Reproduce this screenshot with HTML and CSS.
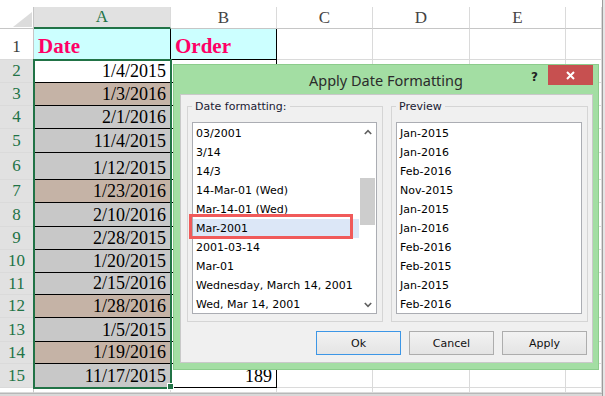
FILE: index.html
```html
<!DOCTYPE html>
<html>
<head>
<meta charset="utf-8">
<link rel="stylesheet" href="styles.css">
</head>
<body>
<div class="window">
  <div class="sheet">
    <div class="topstrip"></div>
    <div class="ch corner"><span class="tri"></span></div>
    <div class="ch sel">A</div><div class="ch">B</div><div class="ch">C</div><div class="ch">D</div><div class="ch">E</div><div class="ch"></div>

    <div class="rh r1">1</div><div class="cell hd a">Date</div><div class="cell hd b">Order</div><div class="cell"></div><div class="cell"></div><div class="cell"></div><div class="cell"></div>

    <div class="rh sel">2</div><div class="cell a w">1/4/2015</div><div class="cell b"></div><div class="cell"></div><div class="cell"></div><div class="cell"></div><div class="cell"></div>
    <div class="rh sel">3</div><div class="cell a tan">1/3/2016</div><div class="cell b"></div><div class="cell"></div><div class="cell"></div><div class="cell"></div><div class="cell"></div>
    <div class="rh sel">4</div><div class="cell a gr">2/1/2016</div><div class="cell b"></div><div class="cell"></div><div class="cell"></div><div class="cell"></div><div class="cell"></div>
    <div class="rh sel">5</div><div class="cell a gr">11/4/2015</div><div class="cell b"></div><div class="cell"></div><div class="cell"></div><div class="cell"></div><div class="cell"></div>
    <div class="rh sel">6</div><div class="cell a gr">1/12/2015</div><div class="cell b"></div><div class="cell"></div><div class="cell"></div><div class="cell"></div><div class="cell"></div>
    <div class="rh sel">7</div><div class="cell a tan">1/23/2016</div><div class="cell b"></div><div class="cell"></div><div class="cell"></div><div class="cell"></div><div class="cell"></div>
    <div class="rh sel">8</div><div class="cell a gr">2/10/2016</div><div class="cell b"></div><div class="cell"></div><div class="cell"></div><div class="cell"></div><div class="cell"></div>
    <div class="rh sel">9</div><div class="cell a gr">2/28/2015</div><div class="cell b"></div><div class="cell"></div><div class="cell"></div><div class="cell"></div><div class="cell"></div>
    <div class="rh sel">10</div><div class="cell a gr">1/20/2015</div><div class="cell b"></div><div class="cell"></div><div class="cell"></div><div class="cell"></div><div class="cell"></div>
    <div class="rh sel">11</div><div class="cell a gr">2/15/2016</div><div class="cell b"></div><div class="cell"></div><div class="cell"></div><div class="cell"></div><div class="cell"></div>
    <div class="rh sel">12</div><div class="cell a tan">1/28/2016</div><div class="cell b"></div><div class="cell"></div><div class="cell"></div><div class="cell"></div><div class="cell"></div>
    <div class="rh sel">13</div><div class="cell a gr">1/5/2015</div><div class="cell b"></div><div class="cell"></div><div class="cell"></div><div class="cell"></div><div class="cell"></div>
    <div class="rh sel">14</div><div class="cell a tan">1/19/2016</div><div class="cell b"></div><div class="cell"></div><div class="cell"></div><div class="cell"></div><div class="cell"></div>
    <div class="rh sel">15</div><div class="cell a gr">11/17/2015</div><div class="cell b">189</div><div class="cell"></div><div class="cell"></div><div class="cell"></div><div class="cell"></div>

    <div class="rh"></div><div class="cell"></div><div class="cell"></div><div class="cell"></div><div class="cell"></div><div class="cell"></div><div class="cell"></div>
    <div class="bottomstrip"></div>
  </div>
  <div class="edge"></div>

  <div class="selection"></div>
  <div class="handle"></div>

  <div class="dialog">
    <div class="titlebar">
      <span class="title">Apply Date Formatting</span>
      <div class="tb-right">
        <span class="help">?</span>
        <span class="close"><svg width="9" height="9" viewBox="0 0 9 9"><path d="M1 1 L8 8 M8 1 L1 8" stroke="#fff" stroke-width="2" fill="none"/></svg></span>
      </div>
    </div>
    <div class="panel">
      <div class="groups">
        <fieldset class="group g1">
          <legend>Date formatting:</legend>
          <div class="listbox">
            <div class="items">
              <div class="item">03/2001</div>
              <div class="item">3/14</div>
              <div class="item">14/3</div>
              <div class="item">14-Mar-01 (Wed)</div>
              <div class="item">Mar-14-01 (Wed)</div>
              <div class="item selected">Mar-2001</div>
              <div class="item">2001-03-14</div>
              <div class="item">Mar-01</div>
              <div class="item">Wednesday, March 14, 2001</div>
              <div class="item">Wed, Mar 14, 2001</div>
            </div>
            <div class="scrollbar">
              <div class="sb-btn"><svg width="8" height="6" viewBox="0 0 8 6"><polyline points="0.8,5 4,1.6 7.2,5" fill="none" stroke="#606060" stroke-width="1.6"/></svg></div>
              <div class="sb-gap"></div>
              <div class="thumb"></div>
              <div class="sb-fill"></div>
              <div class="sb-btn"><svg width="8" height="6" viewBox="0 0 8 6"><polyline points="0.8,1 4,4.4 7.2,1" fill="none" stroke="#606060" stroke-width="1.6"/></svg></div>
            </div>
            <div class="redbox"></div>
          </div>
        </fieldset>
        <fieldset class="group g2">
          <legend>Preview</legend>
          <div class="listbox">
            <div class="items">
              <div class="item">Jan-2015</div>
              <div class="item">Jan-2016</div>
              <div class="item">Feb-2016</div>
              <div class="item">Nov-2015</div>
              <div class="item">Jan-2015</div>
              <div class="item">Jan-2016</div>
              <div class="item">Feb-2016</div>
              <div class="item">Feb-2015</div>
              <div class="item">Jan-2015</div>
              <div class="item">Feb-2016</div>
            </div>
          </div>
        </fieldset>
      </div>
      <div class="buttons">
        <button class="btn default">Ok</button>
        <button class="btn">Cancel</button>
        <button class="btn">Apply</button>
      </div>
    </div>
  </div>
</div>
</body>
</html>
```

FILE: styles.css
```css
* { box-sizing: border-box; }
body { margin: 0; width: 605px; height: 396px; overflow: hidden; background: #fff; }
.window { position: relative; display: flex; width: 605px; height: 396px; overflow: hidden; }

.sheet {
  display: grid;
  grid-template-columns: 34px 137px 106px 96px 97px 96px 36px;
  grid-template-rows: 7px 22px 31px 23px 23px 23px 24px 27px 23px 24px 23px 23px 22px 23px 24px 22px 24px 5px 3px;
  width: 602px;
  height: 396px;
  font-family: "Liberation Serif", "Times New Roman", serif;
}
.topstrip { grid-column: 1 / -1; background: #fff; }
.bottomstrip { grid-column: 1 / -1; background: #d9d9d9; border-top: 1px solid #b8b8b8; }
.edge { width: 3px; height: 396px; background: #e4e4e4; border-left: 1px solid #9c9c9c; }

.ch {
  display: flex; align-items: center; justify-content: center;
  font-size: 17px; color: #444; background: #fff;
  border-right: 1px solid #dadada; border-bottom: 1px solid #c6c6c6;
}
.ch.sel { background: #e1e1e1; color: #217346; border-bottom: 2px solid #217346; }
.corner { justify-content: flex-end; align-items: flex-end; padding: 0 1px 1px 0; border-right-color: #c6c6c6; }
.tri { width: 19px; height: 15px; background: #dcdcdc; clip-path: polygon(100% 0, 100% 100%, 0 100%); }

.rh {
  display: flex; align-items: center; justify-content: center;
  font-size: 17px; color: #3c3c3c; background: #fff;
  border-right: 1px solid #c6c6c6; border-bottom: 1px solid #dadada;
  overflow: hidden;
}
.rh.sel { background: #e1e1e1; color: #217346; }
.rh.r1 { padding-top: 5px; }

.cell {
  display: flex; align-items: flex-end; justify-content: flex-end;
  padding: 0 4px 1px 0;
  font-size: 18px; line-height: 20px; color: #000;
  white-space: nowrap; overflow: hidden;
  border-right: 1px solid #dadada; border-bottom: 1px solid #dadada;
}
.cell.a, .cell.b { border-bottom-color: #000; border-right-color: #000; }
.cell.hd {
  justify-content: flex-start; padding: 0 0 1px 4px;
  font-weight: bold; font-size: 21px; line-height: 24px;
  color: #ff0066; background: #ccffff;
}
.w { background: #fff; }
.tan { background: #c5b3a6; }
.gr { background: #c8c8c8; }

.selection {
  position: absolute; left: 33px; top: 59px; width: 139px; height: 330px;
  border: 2px solid #217346;
}
.handle {
  position: absolute; left: 167px; top: 383px; width: 7px; height: 7px;
  background: #217346; border: 1px solid #fff;
}

/* dialog */
.dialog {
  position: absolute; left: 173px; top: 64px; width: 426px; height: 306px;
  background: #a3dea3; border: 1px solid #8ccc8c;
  display: flex; flex-direction: column;
  font-family: "DejaVu Sans", Verdana, sans-serif; font-size: 11px; color: #000;
}
.titlebar { height: 29px; display: grid; grid-template-columns: 1fr auto 1fr; }
.title {
  grid-column: 2; align-self: center; padding-top: 1px;
  font-family: "Noto Sans", "Open Sans", sans-serif; font-size: 14.5px; color: #2b2b2b;
  white-space: nowrap;
}
.tb-right { grid-column: 3; justify-self: end; display: flex; align-items: flex-start; }
.help { font-weight: bold; font-size: 12px; line-height: 14px; margin-top: 5px; margin-right: 10px; color: #222; }
.close {
  width: 45px; height: 20px; margin-right: 5px; background: #c75050;
  display: flex; align-items: center; justify-content: center;
}

.panel {
  flex: 1; margin: 0 5px 6px 6px;
  background: #f0f0f0; border: 1px solid #c9c9c9;
  padding: 5px 4px 0 6px;
  display: flex; flex-direction: column;
}
.groups { display: flex; gap: 8px; }
.group { margin: 0; min-width: 0; border: 1px solid #d5d5d5; padding: 9px 5px 7px 4px; }
.group legend { padding: 0 3px; line-height: 13px; font-size: 11px; color: #1a1a33; }
.g1 { width: 196px; }
.g2 { width: 197px; }

.listbox { position: relative; display: flex; height: 192px; border: 1px solid #abadb3; background: #fff; }
.items { flex: 1; min-width: 0; padding-top: 1px; }
.item { height: 19px; line-height: 19px; padding-left: 3px; white-space: nowrap; overflow: hidden; }
.item.selected { background: #dce7f7; }
.scrollbar { width: 17px; display: flex; flex-direction: column; }
.sb-btn { height: 17px; display: flex; align-items: center; justify-content: center; }
.sb-gap { height: 38px; }
.thumb { height: 47px; background: #cdcdcd; margin: 0 1px; }
.sb-fill { flex: 1; }
.redbox {
  position: absolute; left: -4px; top: 91px; width: 164px; height: 25px;
  border: 3px solid #f05a5a;
}

.buttons { display: flex; justify-content: flex-end; gap: 8px; margin-top: 9px; padding-right: 1px; }
.btn {
  width: 85px; height: 24px; padding: 0; margin: 0;
  border: 1px solid #adadad; border-radius: 0;
  background: linear-gradient(#f2f2f2, #e4e4e4);
  font-family: "DejaVu Sans", Verdana, sans-serif; font-size: 11px; color: #111;
  display: flex; align-items: center; justify-content: center;
}
.btn.default { border-color: #3c96e6; }
```
